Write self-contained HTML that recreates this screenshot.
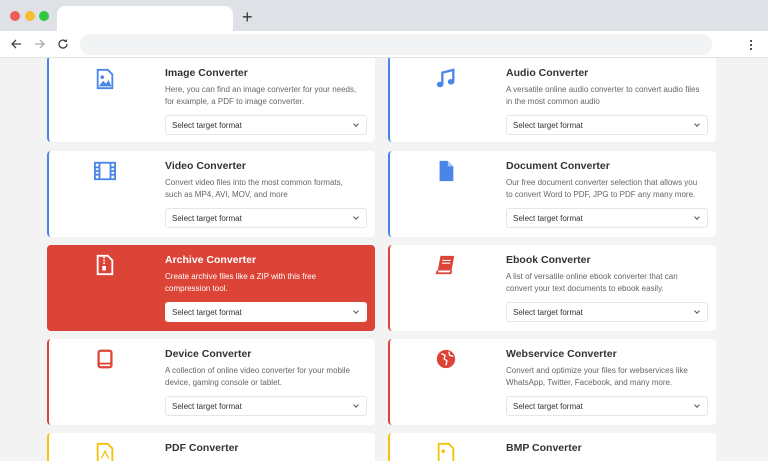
<!DOCTYPE html><html><head><style>
*{margin:0;padding:0;box-sizing:border-box}
html,body{width:768px;height:461px;overflow:hidden}
body{background:#f3f3f3;font-family:"Liberation Sans",sans-serif;position:relative}
.tabbar{position:absolute;left:0;top:0;width:768px;height:31px;background:#dee1e6}
.dot{position:absolute;top:11px;width:10px;height:10px;border-radius:50%}
.tab{position:absolute;left:57px;top:6px;width:176px;height:25px;background:#fff;border-radius:8px 8px 0 0}
.plus{position:absolute;left:242px;top:7px;font-size:18px;color:#333}
.toolbar{position:absolute;left:0;top:31px;width:768px;height:27px;background:#fff;border-bottom:1px solid #e3e3e3}
.addr{position:absolute;left:80px;top:3px;width:632px;height:21px;background:#f1f3f4;border-radius:11px}
.card{position:absolute;width:328px;height:86px;background:#fff;border-radius:4px;border-left:2px solid}
.card .ic{position:absolute;left:45px;top:9px;width:22px;height:22px}
.card h3{position:absolute;left:116px;top:9px;font-size:10.5px;font-weight:bold;color:#333}
.card p{position:absolute;left:116px;top:26px;width:196px;font-size:8px;line-height:12px;color:#666}
.sel{position:absolute;left:116px;top:57px;width:202px;height:20px;border:1px solid #e6e6e6;border-radius:3px;background:#fff;font-size:8px;color:#333;padding:5px 6px}
.sel:after{content:"";position:absolute;right:8px;top:6px;width:3px;height:3px;border-right:1px solid #555;border-bottom:1px solid #555;transform:rotate(45deg)}
.red{background:#db4437}.red h3,.red p{color:#fff}.red .sel{border-color:#fff}
</style></head><body>
<div class="card" style="left:47px;top:56px;border-color:#4a86e8">
<svg class="ic" style="top:12px" viewBox="0 0 24 24"><path d="M4 2h11l5 5v15H4z" fill="none" stroke="#4a86e8" stroke-width="2"/><circle cx="9" cy="10" r="2" fill="#4a86e8"/><path d="M5 20l5-6 3 3 3-4 3 7z" fill="#4a86e8"/></svg>
<h3 style="top:11px">Image Converter</h3><p style="top:28px">Here, you can find an image converter for your needs, for example, a PDF to image converter.</p><div class="sel" style="top:59px">Select target format</div></div>
<div class="card" style="left:388px;top:56px;border-color:#4a86e8">
<svg class="ic" style="top:12px" viewBox="0 0 24 24"><path d="M8 18V5l12-3v13" fill="none" stroke="#4a86e8" stroke-width="2.5"/><ellipse cx="5.5" cy="18" rx="3.5" ry="3" fill="#4a86e8"/><ellipse cx="17.5" cy="15" rx="3.5" ry="3" fill="#4a86e8"/></svg>
<h3 style="top:11px">Audio Converter</h3><p style="top:28px">A versatile online audio converter to convert audio files in the most common audio</p><div class="sel" style="top:59px">Select target format</div></div>

<div class="card" style="left:47px;top:151px;border-color:#4a86e8">
<svg class="ic" viewBox="0 0 24 24"><rect x="1" y="3" width="22" height="18" fill="none" stroke="#4a86e8" stroke-width="2"/><path d="M6 3v18M18 3v18M1 8h5M1 12h5M1 16h5M18 8h5M18 12h5M18 16h5" stroke="#4a86e8" stroke-width="2"/></svg>
<h3>Video Converter</h3><p>Convert video files into the most common formats, such as MP4, AVI, MOV, and more</p><div class="sel">Select target format</div></div>
<div class="card" style="left:388px;top:151px;border-color:#4a86e8">
<svg class="ic" viewBox="0 0 24 24"><path d="M5 1h9l6 6v16H5z" fill="#4a86e8"/><path d="M14 1v6h6" fill="#a8c7fa"/></svg>
<h3>Document Converter</h3><p>Our free document converter selection that allows you to convert Word to PDF, JPG to PDF any many more.</p><div class="sel">Select target format</div></div>

<div class="card red" style="left:47px;top:245px;border-color:#db4437">
<svg class="ic" viewBox="0 0 24 24"><path d="M4 2h11l5 5v15H4z" fill="none" stroke="#fff" stroke-width="2"/><path d="M10 4h2M10 7h2M10 10h2" stroke="#fff" stroke-width="1.5"/><path d="M9 13h4v5H9z" fill="#fff"/></svg>
<h3>Archive Converter</h3><p style="width:180px">Create archive files like a ZIP with this free compression tool.</p><div class="sel">Select target format</div></div>
<div class="card" style="left:388px;top:245px;border-color:#db4437">
<svg class="ic" viewBox="0 0 24 24"><path d="M6 2h15l-3 16H3z" fill="#db4437"/><path d="M3 18l-1 3h15l1-3" fill="none" stroke="#db4437" stroke-width="2"/><path d="M8 7h9M7.5 10h9" stroke="#fff" stroke-width="1.3"/></svg>
<h3>Ebook Converter</h3><p style="width:185px">A list of versatile online ebook converter that can convert your text documents to ebook easily.</p><div class="sel">Select target format</div></div>

<div class="card" style="left:47px;top:339px;border-color:#db4437">
<svg class="ic" viewBox="0 0 24 24"><rect x="5" y="3" width="14" height="18" rx="2" fill="none" stroke="#db4437" stroke-width="2.5"/><path d="M5 17h14" stroke="#db4437" stroke-width="2"/></svg>
<h3>Device Converter</h3><p>A collection of online video converter for your mobile device, gaming console or tablet.</p><div class="sel">Select target format</div></div>
<div class="card" style="left:388px;top:339px;border-color:#db4437">
<svg class="ic" viewBox="0 0 24 24"><circle cx="12" cy="12" r="10" fill="#db4437"/><path d="M7 6l4 2-1 4 3 2-1 5M15 4l1 4 4 1" stroke="#fff" stroke-width="1.5" fill="none"/></svg>
<h3>Webservice Converter</h3><p>Convert and optimize your files for webservices like WhatsApp, Twitter, Facebook, and many more.</p><div class="sel">Select target format</div></div>

<div class="card" style="left:47px;top:433px;border-color:#f4c20d">
<svg class="ic" viewBox="0 0 24 24"><path d="M4 2h11l5 5v15H4z" fill="none" stroke="#f4c20d" stroke-width="2"/><path d="M8 18l4-8 4 8" stroke="#f4c20d" stroke-width="1.5" fill="none"/></svg>
<h3>PDF Converter</h3></div>
<div class="card" style="left:388px;top:433px;border-color:#f4c20d">
<svg class="ic" viewBox="0 0 24 24"><path d="M4 2h11l5 5v15H4z" fill="none" stroke="#f4c20d" stroke-width="2"/><circle cx="9" cy="10" r="2" fill="#f4c20d"/></svg>
<h3>BMP Converter</h3></div>

<div class="tabbar"><div class="dot" style="left:10px;background:#ed5f57"></div><div class="dot" style="left:25px;background:#f5bd2f"></div><div class="dot" style="left:39px;background:#2fc840"></div><div class="tab"></div><div class="plus">+</div></div>
<div class="toolbar">
<svg style="position:absolute;left:10px;top:7px" width="12" height="12" viewBox="0 0 12 12"><path d="M11 6H2M6 2L2 6l4 4" stroke="#444" stroke-width="1.3" fill="none"/></svg>
<svg style="position:absolute;left:34px;top:7px" width="12" height="12" viewBox="0 0 12 12"><path d="M1 6h9M6 2l4 4-4 4" stroke="#aaa" stroke-width="1.3" fill="none"/></svg>
<svg style="position:absolute;left:57px;top:7px" width="12" height="12" viewBox="0 0 12 12"><path d="M10 6a4 4 0 1 1-1.2-2.8" stroke="#444" stroke-width="1.3" fill="none"/><path d="M10 1v3H7z" fill="#444"/></svg>
<div class="addr"></div>
<div style="position:absolute;left:750px;top:8px;width:2px;height:11px;background:radial-gradient(circle,#444 1px,transparent 1.2px) 0 0/2px 4px"></div>
</div>
</body></html>
